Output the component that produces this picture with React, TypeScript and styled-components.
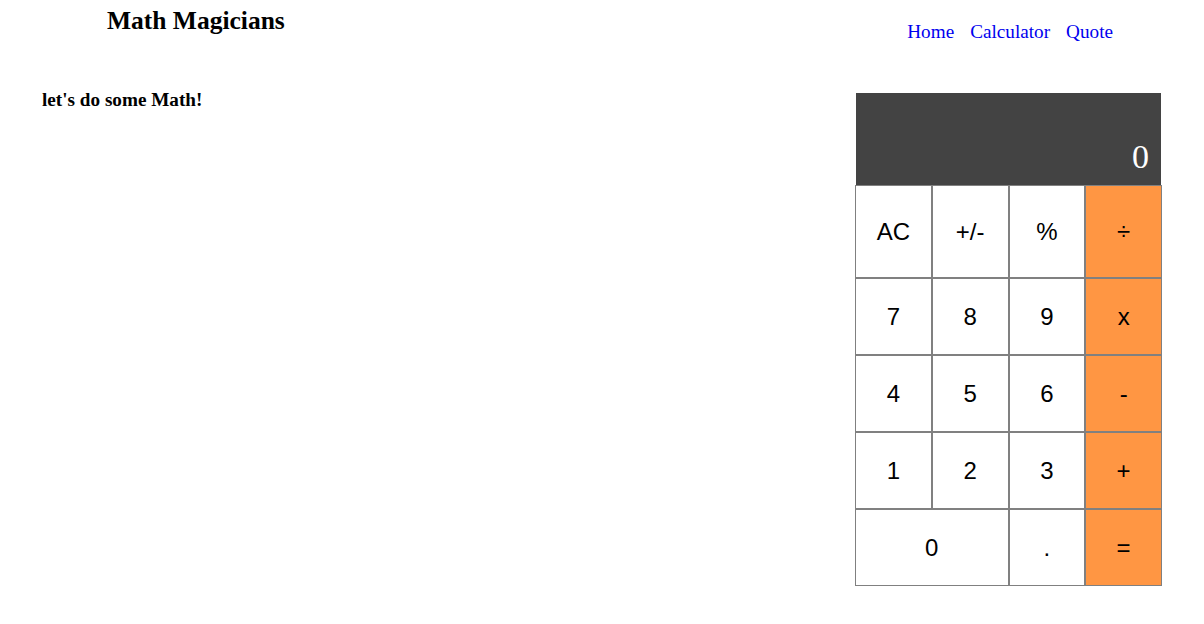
import React from 'react'
import styled, { createGlobalStyle } from 'styled-components'

const GlobalStyle = createGlobalStyle`
  body {
    margin: 0;
    background: #fff;
    font-family: 'Liberation Serif', 'Times New Roman', serif;
  }
`

const Header = styled.header`
  display: flex;
  justify-content: space-between;
  align-items: flex-start;
  height: 42px;
  padding: 0 91px 0 107px;
`

const Title = styled.h1`
  margin: 6px 0 0;
  font-size: 25.5px;
  line-height: 30px;
  font-weight: 700;
  color: #000;
`

const Nav = styled.nav`
  display: flex;
  gap: 16px;
  margin-top: 21px;
`

const NavLink = styled.a`
  font-size: 19.2px;
  line-height: 21px;
  color: #0000ee;
  text-decoration: none;
`

const Main = styled.main`
  display: flex;
  justify-content: space-between;
  align-items: flex-start;
  padding: 47px 42px 0 42px;
`

const Intro = styled.p`
  margin: 0;
  font-size: 19.2px;
  line-height: 22px;
  font-weight: 700;
`

const Calculator = styled.div`
  width: 307px;
  margin-top: 4px;
`

const Display = styled.div`
  display: flex;
  align-items: flex-end;
  justify-content: flex-end;
  height: 92px;
  margin: 0 1px;
  padding: 0 12px 11px;
  box-sizing: border-box;
  background: #434343;
  color: #fff;
  font-size: 34px;
  line-height: 34px;
`

const Keys = styled.div`
  display: grid;
  grid-template-columns: repeat(4, 1fr);
  grid-template-rows: 93px repeat(4, 77px);
`

const Key = styled.button<{ $op?: boolean; $wide?: boolean }>`
  grid-column: ${(p) => (p.$wide ? 'span 2' : 'auto')};
  margin: 0;
  padding: 0;
  border: 1px solid #808080;
  border-radius: 0;
  background: ${(p) => (p.$op ? '#ff9643' : '#fff')};
  color: #000;
  font-family: 'Liberation Sans', Arial, sans-serif;
  font-size: 24px;
  cursor: pointer;
`

const keys: { label: string; op?: boolean; wide?: boolean }[] = [
  { label: 'AC' },
  { label: '+/-' },
  { label: '%' },
  { label: '÷', op: true },
  { label: '7' },
  { label: '8' },
  { label: '9' },
  { label: 'x', op: true },
  { label: '4' },
  { label: '5' },
  { label: '6' },
  { label: '-', op: true },
  { label: '1' },
  { label: '2' },
  { label: '3' },
  { label: '+', op: true },
  { label: '0', wide: true },
  { label: '.' },
  { label: '=', op: true },
]

const App = () => (
  <>
    <GlobalStyle />
    <Header>
      <Title>Math Magicians</Title>
      <Nav>
        <NavLink href="#">Home</NavLink>
        <NavLink href="#">Calculator</NavLink>
        <NavLink href="#">Quote</NavLink>
      </Nav>
    </Header>
    <Main>
      <Intro>let's do some Math!</Intro>
      <Calculator>
        <Display>0</Display>
        <Keys>
          {keys.map((k) => (
            <Key key={k.label} $op={k.op} $wide={k.wide} type="button">
              {k.label}
            </Key>
          ))}
        </Keys>
      </Calculator>
    </Main>
  </>
)

export default App
